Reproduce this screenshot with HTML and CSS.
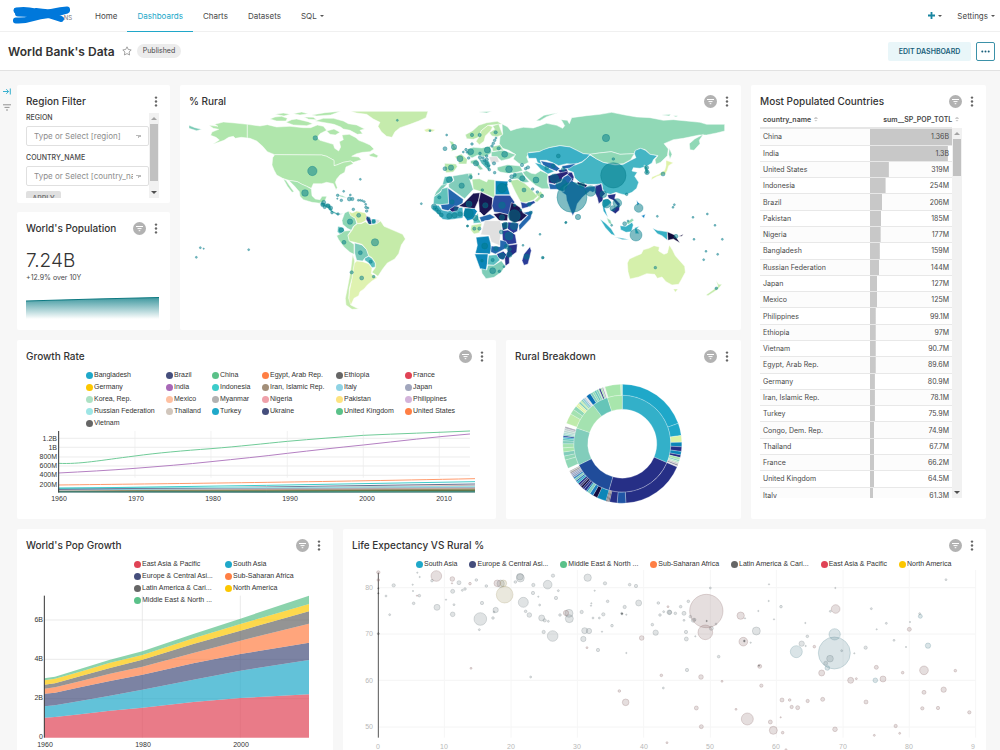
FILE: index.html
```html
<!DOCTYPE html>
<html lang="en">
<head>
  <meta charset="UTF-8">
  <meta name="viewport" content="width=device-width, initial-scale=1.0">
  <title>World Bank's Data</title>
  <link rel="stylesheet" href="styles.css">
</head>
<body>
  <svg class="defs" width="0" height="0" aria-hidden="true">
    <symbol id="filter" viewBox="0 0 13 13">
      <circle cx="6.5" cy="6.5" r="6.5" fill="#b2b2b2"/>
      <path d="M3 4.5h7M4.5 6.6h4M5.7 8.7h1.6" stroke="#fff" stroke-width="1"/>
    </symbol>
    <symbol id="dots" viewBox="0 0 4 11">
      <circle cx="2" cy="1.6" r="1.2"/><circle cx="2" cy="5.5" r="1.2"/><circle cx="2" cy="9.4" r="1.2"/>
    </symbol>
  </svg>

  <div class="app">
    <header class="navbar">
      <a href="#" class="logo" aria-label="Logo">
        <span>NS</span>
        <svg viewBox="0 0 60 18" width="60" height="18">
          <path d="M4.500 4.500Q14 3 23 5.500T37 9Q44 11 49 13M4 14.500Q12 15 20 12.500T37 9Q46 7 55 4.500M6 7.500Q20 8 30 9.500M24 5Q36 7 42 5.500T55 3.500" fill="none" stroke="#0078db" stroke-width="6" stroke-linecap="round" stroke-linejoin="round"/>
        </svg>
      </a>
      <nav>
        <a href="#">Home</a>
        <a href="#" class="active">Dashboards</a>
        <a href="#">Charts</a>
        <a href="#">Datasets</a>
        <a href="#">SQL <i class="caret"></i></a>
      </nav>
      <div class="nav-right">
        <a href="#" class="add" aria-label="Add"><svg width="7" height="7" viewBox="0 0 7 7"><path d="M3.500 0v7M0 3.500h7" stroke="#1985a0" stroke-width="1.800"/></svg><i class="caret"></i></a>
        <a href="#">Settings <i class="caret"></i></a>
      </div>
    </header>

    <div class="titlebar">
      <h1>World Bank's Data</h1>
      <svg class="star" width="10" height="10" viewBox="0 0 10 10"><path d="M5 .8l1.300 2.700 2.900.4-2.100 2.100.5 3L5 7.600 2.400 9l.5-3L.8 3.900l2.900-.4z" fill="none" stroke="#999" stroke-width=".9"/></svg>
      <span class="status">Published</span>
      <button type="button" class="edit">EDIT DASHBOARD</button>
      <button type="button" class="more" aria-label="More"><svg width="9" height="3" viewBox="0 0 9 3"><circle cx="1.300" cy="1.500" r="1"/><circle cx="4.500" cy="1.500" r="1"/><circle cx="7.700" cy="1.500" r="1"/></svg></button>
    </div>

    <div class="content">
      <aside class="rail">
        <svg width="8" height="7" viewBox="0 0 8 7"><path d="M0 3.500h5.500M3.300 1.200l2.300 2.300-2.300 2.300M7.300.5v6" fill="none" stroke="#20a7c9" stroke-width=".9"/></svg>
        <svg width="8" height="7" viewBox="0 0 8 7"><path d="M0 .8h8M1.500 3.400h5M3 6h2" stroke="#888" stroke-width=".9"/></svg>
      </aside>

      <main>
        <div class="upper">
          <div class="upper-left">
            <div class="row-map">
              <div class="stack">
                <section class="card region">
                  <div class="card-head"><h2>Region Filter</h2><svg class="dots"><use href="#dots"/></svg></div>
                  <div class="region-body">
                    <form>
                      <label for="region">REGION</label>
                      <select id="region"><option>Type or Select [region]</option></select>
                      <label for="country">COUNTRY_NAME</label>
                      <select id="country"><option>Type or Select [country_name]</option></select>
                      <button type="button" class="apply">APPLY</button>
                    </form>
                    <div class="scrollbar"><i class="up"></i><b></b><i class="down"></i></div>
                  </div>
                </section>
                <section class="card population">
                  <div class="card-head"><h2>World's Population</h2><svg class="badge"><use href="#filter"/></svg><svg class="dots"><use href="#dots"/></svg></div>
                  <div class="big">7.24B</div>
                  <div class="sub">+12.9% over 10Y</div>
                  <svg class="spark" viewBox="0 0 133 23" preserveAspectRatio="none">
                    <defs><linearGradient id="fade" x1="0" y1="0" x2="0" y2="1"><stop offset="0" stop-color="#3f989f"/><stop offset="1" stop-color="#fff"/></linearGradient></defs>
                    <path d="M0 5L70 3 133 1.500V23H0z" fill="url(#fade)"/>
                    <path d="M0 5L70 3 133 1.500" fill="none" stroke="#0f7a82" stroke-width="1.200"/>
                  </svg>
                </section>
              </div>
              <section class="card">
                <div class="card-head"><h2>% Rural</h2><svg class="badge"><use href="#filter"/></svg><svg class="dots"><use href="#dots"/></svg></div>
                <svg id="map" class="chart" viewBox="189 111 543 210"></svg>
              </section>
            </div>

            <div class="row-growth">
              <section class="card">
                <div class="card-head"><h2>Growth Rate</h2><svg class="badge"><use href="#filter"/></svg><svg class="dots"><use href="#dots"/></svg></div>
                <ul class="legend legend-growth" id="growthLegend"></ul>
                <svg id="growth" class="chart" viewBox="26 429 461 78"></svg>
              </section>
              <section class="card">
                <div class="card-head"><h2>Rural Breakdown</h2><svg class="badge"><use href="#filter"/></svg><svg class="dots"><use href="#dots"/></svg></div>
                <svg id="sunburst" class="chart" viewBox="515 366 217 144"></svg>
              </section>
            </div>
          </div>

          <section class="card">
            <div class="card-head"><h2>Most Populated Countries</h2><svg class="badge"><use href="#filter"/></svg><svg class="dots"><use href="#dots"/></svg></div>
            <div class="table-wrap">
              <table id="countries">
                <thead>
                  <tr><th>country_name <i class="sort"></i></th><th><span>sum__SP_POP_TOTL <i class="sort"></i></span></th></tr>
                </thead>
                <tbody></tbody>
              </table>
              <div class="scrollbar"><i class="up"></i><b></b><i class="down"></i></div>
            </div>
          </section>
        </div>

        <div class="lower">
          <section class="card">
            <div class="card-head"><h2>World's Pop Growth</h2><svg class="badge"><use href="#filter"/></svg><svg class="dots"><use href="#dots"/></svg></div>
            <ul class="legend legend-pop" id="popLegend"></ul>
            <svg id="pop" class="chart" viewBox="26 594 298 165"></svg>
          </section>
          <section class="card">
            <div class="card-head"><h2>Life Expectancy VS Rural %</h2><svg class="badge"><use href="#filter"/></svg><svg class="dots"><use href="#dots"/></svg></div>
            <ul class="legend legend-life" id="lifeLegend"></ul>
            <svg id="life" class="chart" viewBox="352 570 625 189"></svg>
          </section>
        </div>
      </main>
    </div>
  </div>

  <script src="script.js"></script>
</body>
</html>
```
FILE: styles.css
```css
* {
  box-sizing: border-box;
}
body {
  margin: 0;
  font-family: Inter, "Liberation Sans", sans-serif;
  font-size: 8px;
  color: #484848;
  background: #f7f7f7;
}
h1, h2, ul {
  margin: 0;
  padding: 0;
}
a {
  color: inherit;
  text-decoration: none;
}
button, select {
  font: inherit;
  cursor: pointer;
}
.defs {
  position: absolute;
}
.app {
  display: flex;
  flex-direction: column;
  height: 100vh;
  overflow: hidden;
}

/* top navigation */
.navbar {
  display: flex;
  flex: none;
  height: 32px;
  background: #fff;
  border-bottom: 1px solid #f0f0f0;
}
.logo {
  position: relative;
  width: 60px;
  margin: 6px 13px 0 12px;
}
.logo span {
  position: absolute;
  right: 0;
  top: 8px;
  font-size: 6px;
  color: #777;
}
.logo svg {
  position: relative;
  display: block;
}
nav {
  display: flex;
}
nav a {
  display: flex;
  align-items: center;
  height: 32px;
  padding: 0 10px;
  border-bottom: 1px solid transparent;
}
nav a.active {
  color: #20a7c9;
  border-bottom-color: #20a7c9;
}
.caret {
  display: inline-block;
  margin-left: 3px;
  border: 2px solid transparent;
  border-top-color: #555;
  border-bottom: 0;
}
.nav-right {
  display: flex;
  align-items: center;
  gap: 15px;
  margin-left: auto;
  padding-right: 5px;
}
.nav-right a {
  display: flex;
  align-items: center;
}

/* dashboard title */
.titlebar {
  display: flex;
  flex: none;
  align-items: center;
  height: 39px;
  padding: 0 5px 0 8px;
  background: #fff;
  border-bottom: 1px solid #e2e2e2;
}
h1 {
  font-size: 12px;
  font-weight: 600;
  color: #333;
}
.star {
  margin: 0 5px 0 7px;
}
.status {
  height: 14px;
  padding: 0 6px;
  border-radius: 7px;
  background: #ececec;
  font-size: 7px;
  line-height: 14px;
}
.edit, .more {
  height: 19px;
  padding: 0;
  border-radius: 2px;
  color: #1a5f7a;
}
.edit {
  width: 83px;
  margin-left: auto;
  border: 0;
  background: #e9f6f9;
  font-size: 7px;
  font-weight: 600;
}
.more {
  display: flex;
  align-items: center;
  justify-content: center;
  width: 19px;
  margin-left: 5px;
  border: 1px solid #3b91a8;
  background: #fff;
}
.more svg {
  fill: #1a5f7a;
}

/* dashboard grid */
.content {
  display: flex;
}
.rail {
  display: flex;
  flex: none;
  flex-direction: column;
  align-items: center;
  gap: 9px;
  width: 17px;
  padding: 17px 3px 0 0;
}
main {
  flex: 1;
  min-width: 0;
  padding: 14px 14px 14px 0;
}
.upper, .row-map, .row-growth, .lower {
  display: grid;
  gap: 10px;
}
.upper {
  grid-template-columns: 724fr 235fr;
}
.row-map {
  grid-template-columns: 153fr 561fr;
  margin-bottom: 10px;
}
.row-growth {
  grid-template-columns: 479fr 235fr;
}
.lower {
  grid-template-columns: 316fr 643fr;
  margin-top: 10px;
}
.stack {
  display: grid;
  grid-template-rows: 1fr 1fr;
  gap: 9px;
  min-width: 0;
}
.card {
  min-width: 0;
  padding: 9px;
  border-radius: 2px;
  background: #fff;
}
.card-head {
  display: flex;
  align-items: center;
  gap: 8px;
  height: 14px;
  margin-bottom: 3px;
  padding-right: 3px;
}
h2 {
  margin-right: auto;
  font-size: 10px;
  font-weight: 500;
  line-height: 14px;
  color: #333;
  white-space: nowrap;
}
.badge {
  width: 13px;
  height: 13px;
}
.dots {
  width: 4px;
  height: 11px;
  fill: #666;
}
.chart {
  display: block;
  width: 100%;
  height: auto;
}
.chart text {
  font-family: "Liberation Sans", Arial, sans-serif;
  font-size: 7px;
  fill: #333;
}
.chart text.faint {
  fill: #b8b8b8;
}

/* fake scrollbars */
.scrollbar {
  display: flex;
  flex: none;
  flex-direction: column;
  align-items: center;
  width: 10px;
  background: #f1f1f1;
}
.scrollbar b {
  width: 8px;
  background: #c1c1c1;
}
.scrollbar i {
  margin: 4px 0;
  border: 3px solid transparent;
}
.scrollbar .up {
  border-top: 0;
  border-bottom-color: #a3a3a3;
}
.scrollbar .down {
  margin-top: auto;
  border-bottom: 0;
  border-top-color: #505050;
}

/* region filter */
.region {
  padding-bottom: 4px;
}
.region-body {
  display: flex;
  height: 87px;
  padding-top: 2px;
  margin-right: 2px;
}
.region form {
  flex: 1;
  min-width: 0;
  overflow: hidden;
}
.region label {
  display: block;
  margin-bottom: 3px;
  font-size: 7px;
  font-weight: 500;
  line-height: 10px;
}
.region select {
  display: block;
  width: 100%;
  height: 20px;
  margin-bottom: 7px;
  padding: 0 15px 0 7px;
  border: 1px solid #e0e0e0;
  border-radius: 2px;
  appearance: none;
  color: #8c8c8c;
  background:
    linear-gradient(45deg, transparent 50%, #bbb 50%) no-repeat right 9px center / 3px 3px,
    linear-gradient(-45deg, transparent 50%, #bbb 50%) no-repeat right 6px center / 3px 3px,
    #fff;
}
.apply {
  display: block;
  width: 35px;
  height: 15px;
  margin-top: -2px;
  padding: 0;
  border: 0;
  border-radius: 2px;
  font-size: 7px;
  font-weight: 600;
  color: #777;
  background: #e0e0e0;
}
.region .scrollbar b {
  height: 57px;
}

/* big number */
.big {
  margin-top: 14px;
  font-size: 19px;
  font-weight: 300;
  line-height: 24px;
  color: #333;
}
.sub {
  font-size: 7px;
  line-height: 10px;
}
.spark {
  display: block;
  width: 133px;
  max-width: 100%;
  height: 23px;
  margin-top: 13px;
}

/* legends */
.legend {
  display: grid;
  margin-top: 6px;
  list-style: none;
  font-family: "Liberation Sans", Arial, sans-serif;
  font-size: 7px;
  line-height: 12px;
  color: #333;
}
.legend li {
  display: flex;
  align-items: center;
  gap: 1px;
  white-space: nowrap;
}
.legend i {
  width: 7px;
  height: 7px;
  border-radius: 50%;
}
.legend-growth {
  grid-template-columns: 80px 46px 50px 74px 69px auto;
  padding-left: 60px;
}
.legend-pop {
  grid-template-columns: 91px auto;
  padding-left: 108px;
}
.legend-pop + .chart {
  position: relative;
  margin-top: -12px;
}
.legend-life {
  display: flex;
  gap: 12px;
  padding-left: 64px;
}

/* country table */
.table-wrap {
  display: flex;
  height: 387px;
  margin-right: 15px;
  overflow: hidden;
}
.table-wrap .scrollbar {
  margin-top: 17px;
}
.table-wrap .scrollbar b {
  height: 37px;
}
table {
  flex: 1;
  height: 393px;
  table-layout: fixed;
  border-collapse: collapse;
  font-size: 7px;
}
th {
  height: 17px;
  padding: 0 3px;
  border-bottom: 2px solid #e6e6e6;
  font-weight: 600;
  text-align: left;
  white-space: nowrap;
}
th:last-child {
  width: 82px;
  text-align: right;
}
th span {
  margin-right: -10px;
}
.sort {
  display: inline-block;
  width: 4px;
  height: 5px;
  margin-left: 1px;
  background: linear-gradient(#ccc 2px, transparent 2px, transparent 3px, #ccc 3px);
  clip-path: polygon(50% 0, 100% 40%, 100% 60%, 50% 100%, 0 60%, 0 40%);
}
td {
  padding: 0 3px;
  border-bottom: 1px solid #e8e8e8;
}
td:last-child {
  text-align: right;
  background: linear-gradient(#c8c8c8, #c8c8c8) no-repeat;
}
tbody tr:nth-child(odd) {
  background: #fcfcfc;
}
```
FILE: script.js
```js
const LAND = {
  americas: { t: "translate(180 85) scale(.33333)", shapes: [
    ["#7ccbb6", "M27 121L45 128 65 133 50 137 27 130Z"],
    ["#b0e6ac", "M202 118L165 114 130 111 104 118 114 124 87 121 100 130 116 133 96 141 92 151 108 157 118 165 98 178 132 166 146 157 160 154 166 160 184 157 202 159Z"],
    ["#b0e6ac", "M202 118L240 123 262 119 290 126 330 124 370 128 392 128 412 120 430 124 440 136 420 146 411 158 420 166 440 172 460 178 464 190 476 198 482 186 478 170 490 164 486 150 508 148 528 158 536 166 552 172 570 180 582 192 570 200 548 202 530 206 515 214 536 216 544 224 520 232 512 228 490 232 470 240 462 242 462 226 440 214 425 210 284 209 262 200 248 184 230 168 210 160 202 159Z"],
    ["#b0e6ac", "M566 210L580 204 595 212 590 218 572 214Z"],
    ["#b0e6ac", "M270 102L285 96 305 94 322 100 318 108 290 108ZM318 112L335 104 350 102 384 110 398 116 380 122 340 120ZM285 88L310 84 330 88 312 93ZM340 86L365 81 385 86 360 90ZM395 90L435 83 482 79 452 90 410 93ZM372 96L400 97 410 104 386 103Z"],
    ["#b0e6ac", "M405 108L430 100 460 100 490 108 505 116 530 120 554 132 540 136 548 146 532 148 510 136 490 132 482 126 462 118 440 114ZM440 138L462 132 480 142 466 150 450 148Z"],
    ["#b0e6ac", "M284 209L425 210 440 214 462 226 462 242 470 240 490 232 512 228 520 236 498 246 494 262 480 270 470 282 466 292 472 308 468 314 460 296 440 292 425 296 400 296 394 310 380 304 366 298 352 290 326 286 308 280 290 270 282 255 276 240 278 218Z"],
    ["#a5e2ae", "M326 286L352 290 366 298 380 304 394 312 396 332 406 342 420 344 426 334 440 334 436 346 424 356 414 354 396 352 370 344 360 334 358 320 344 304Z"],
    ["#a5e2ae", "M310 282L318 286 330 304 342 320 336 322 322 304Z"],
    ["#55b5b5", "M420 352L450 358 458 378 476 386 490 386 472 390 452 380 442 368 424 362Z"],
    ["#90d8b6", "M470 328L488 332 502 339 482 335Z"],
    ["#c5ebac", "M512 79L744 79 738 98 716 108 690 118 660 128 645 140 636 157 620 154 604 140 594 124 600 112 580 102 560 88 530 84Z"],
    ["#dff2b0", "M732 134L745 130 766 134 758 140 738 141Z"],
    ["#8dd6b4", "M494 384L506 378 512 390 526 400 530 416 520 424 514 436 502 430 488 418 486 406Z"],
    ["#d6efa8", "M506 378L516 384 530 378 556 384 562 396 556 408 544 414 532 416 526 400 512 392Z"],
    ["#2b2f86", "M560 392L572 402 576 418 566 418 558 402Z"],
    ["#45b3c0", "M574 402L588 402 588 416 576 418Z"],
    ["#e0e0e0", "M588 402L600 406 596 416 588 416Z"],
    ["#63c2bb", "M474 424L490 428 494 438 480 448 472 440Z"],
    ["#9cddb1", "M494 438L514 436 504 450 508 468 522 478 522 508 510 502 492 486 476 464 470 452 482 446Z"],
    ["#7bcab9", "M524 474L546 480 560 494 566 512 554 520 548 528 530 526 524 504Z"],
    ["#5cbfc0", "M554 520L566 514 576 520 586 534 586 546 576 548 566 534 554 526Z"],
    ["#c5eba9", "M532 416L544 416 556 410 570 420 590 416 602 408 612 424 640 436 668 448 676 462 664 480 656 506 644 522 622 534 608 552 594 574 576 562 586 548 586 534 576 518 566 512 560 494 546 478 524 472 508 468 504 452 516 436 522 424Z"],
    ["#dff2b0", "M530 528L548 530 566 536 576 550 574 566 592 578 576 588 562 600 552 612 540 620 536 632 522 640 512 662 506 652 508 620 514 590 518 560 522 536Z"],
    ["#c5ebac", "M518 508L524 528 520 552 516 580 508 610 506 640 512 660 536 672 516 673 498 660 496 640 504 600 512 556Z"]
  ], dots: [[406,159,7],[397,258,14],[375,324,10],[652,106,3],[750,137,3],[541,283,3],[491,319,3],[473,331,4],[511,330,3],[472,341,2],[484,346,4],[508,342,6],[517,342,5],[535,346,3],[541,346,3],[547,347,3],[553,350,3],[557,358,3],[558,367,4],[564,369,3],[560,378,4],[520,373,4],[431,352,6],[428,359,6],[434,366,5],[444,362,6],[452,369,6],[456,383,4],[474,387,4],[536,391,6],[566,400,4],[569,412,4],[510,410,8],[581,409,5],[484,435,7],[492,472,6],[585,472,11],[541,503,6],[572,530,5],[515,562,5],[545,579,6],[581,575,4],[61,488,3],[71,491,2],[49,517,3],[206,494,3],[724,356,3],[863,423,3]] },

  africa: { t: "translate(420 100) scale(.33333)", shapes: [
    ["#b8e7ab", "M136 104L158 92 176 76 200 68 232 64 246 72 226 74 204 76 184 92 176 112 160 118 140 116Z"],
    ["#c5ebac", "M184 92L204 76 218 80 212 92 196 108 192 124 178 134 168 124 176 112Z"],
    ["#b5e5ab", "M218 78L236 72 244 94 248 104 232 110 216 108 208 98 224 88Z"],
    ["#90d8b6", "M348 62L372 46 414 38 380 50 360 62ZM176 36L215 34 200 39Z"],
    ["#b8e7ab", "M74 190L108 192 112 200 100 216 78 218 74 206Z"],
    ["#b8e7ab", "M104 170L124 162 142 178 140 192 116 192 116 182Z"],
    ["#b0e5ac", "M88 122L100 126 104 138 112 148 94 154 98 142 92 132Z"],
    ["#8ed8b5", "M142 148L160 142 186 144 210 138 216 158 196 170 172 166 156 174 142 164Z"],
    ["#90d8b6", "M214 156L248 150 270 158 288 164 268 176 244 182 232 172 214 170Z"],
    ["#a5e0b0", "M216 140L240 134 250 150 218 154Z"],
    ["#e0e0e0", "M206 170L232 170 238 186 214 190Z"],
    ["#8dd6b4", "M152 182L170 178 180 196 190 208 180 210 166 194 152 190Z"],
    ["#5cb9b9", "M176 176L206 182 212 196 206 212 196 202 184 190Z"],
    ["#8dd6b4", "M232 202L262 194 300 198 308 212 286 218 262 220 240 216 232 210Z"],
    ["#7fcdb8", "M282 220L306 216 314 230 328 246 310 248 292 236 276 238Z"],
    ["#90d8b6", "M308 216L320 212 334 220 346 222 362 212 384 222 382 246 388 266 366 266 346 256 328 240 314 226Z"],
    ["#b8e7ab", "M270 242L292 238 314 250 330 264 346 282 356 286 340 300 316 308 302 306 286 276Z"],
    ["#b8e7ab", "M346 282L362 274 372 286 352 306 342 304 356 290Z"],
    ["#2748a0", "M302 306L318 310 342 302 346 308 322 322 306 326Z"],
    ["#2467ae", "M362 182L380 186 400 190 420 206 410 214 390 206 370 196Z"],
    ["#3bb0c6", "M344 188L362 192 384 204 404 214 384 222 362 208Z"],
    ["#2467ae", "M425 198L470 190 450 204 430 208Z"],
    ["#262f86", "M414 210L440 206 446 220 420 220Z"],
    ["#2a2478", "M384 228L404 222 440 214 446 220 428 232 424 244 404 252 386 248Z"],
    ["#2467ae", "M386 250L404 254 424 246 430 232 444 224 456 236 446 252 432 262 432 276 410 268 390 268Z"],
    ["#63c2bb", "M74 230L96 228 100 242 84 250 66 260 70 244Z"],
    ["#7fcdb8", "M64 256L84 250 60 276 42 290 48 276Z"],
    ["#82cdbb", "M98 228L146 220 150 240 160 268 134 296 86 262 86 252 102 242Z"],
    ["#8dd6b4", "M146 220L156 220 158 238 150 240Z"],
    ["#b0e5ac", "M156 238L178 236 200 246 204 238 224 240 224 294 180 274 160 268Z"],
    ["#0b86b8", "M226 242L264 244 262 256 270 284 226 284Z"],
    ["#63c2bb", "M42 290L62 276 66 266 84 262 86 312 62 314 40 312Z"],
    ["#2467ae", "M84 264L130 298 128 310 104 322 84 332 66 328 62 314 86 312Z"],
    ["#45aec2", "M36 316L56 316 66 330 84 334 104 324 128 322 130 346 128 354 84 360 68 358 52 340 38 330Z"],
    ["#2a2478", "M88 328L104 318 118 320 112 332 96 336Z"],
    ["#1c1552", "M116 318L132 308 160 280 180 278 176 300 164 326 132 322Z"],
    ["#1c1552", "M182 276L218 294 216 326 192 348 178 334 176 302Z"],
    ["#2a4da0", "M224 286L270 286 284 306 276 330 264 344 240 338 222 336 216 318 220 296Z"],
    ["#0b86b8", "M134 324L164 326 172 334 158 358 142 362 130 346Z"],
    ["#5cbfc0", "M160 358L174 338 176 356 184 368 160 370Z"],
    ["#2467ae", "M178 352L210 342 226 352 208 360 184 366Z"],
    ["#1c1552", "M220 342L240 338 264 344 262 362 238 362Z"],
    ["#1c1552", "M266 342L274 308 284 312 300 322 308 336 322 346 304 362 284 368 268 360Z"],
    ["#2467ae", "M308 338L338 332 332 356 298 392 296 376 306 364 324 346Z"],
    ["#2a3c98", "M264 366L296 370 292 394 280 400 262 386Z"],
    ["#1f3c7c", "M244 370L262 366 262 386 248 392Z"],
    ["#c5ebac", "M154 376L186 370 178 398 162 402 152 390Z"],
    ["#e0e0e0", "M194 362L240 362 246 380 240 420 242 438 214 426 208 406 182 404Z"],
    ["#2a3c98", "M246 392L264 390 286 404 290 430 264 434 248 420Z"],
    ["#0b86b8", "M168 412L206 408 212 430 214 446 210 462 166 460 172 436Z"],
    ["#2467ae", "M214 438L240 440 240 420 258 424 266 440 244 452 226 462 212 456Z"],
    ["#262f86", "M264 436L292 432 290 456 268 472 268 490 256 498 254 474 262 456Z"],
    ["#2a3c98", "M230 462L250 454 260 464 250 480 234 474Z"],
    ["#0b86b8", "M164 462L204 462 202 490 198 512 180 506Z"],
    ["#5cbfc0", "M206 466L230 464 240 480 222 496 202 494Z"],
    ["#7fcdb8", "M184 506L200 510 204 496 222 496 244 482 256 498 244 516 222 532 198 536 186 520Z"],
    ["#2a3c98", "M330 440L334 452 324 492 312 496 306 482 312 462Z"]
  ], dots: [[102,141,8],[75,146,6],[80,105,3],[156,105,5],[179,105,5],[227,97,5],[152,155,9],[120,176,9],[93,203,8],[75,206,6],[168,190,8],[202,150,9],[254,163,9],[236,145,5],[222,190,5],[267,208,10],[88,239,9],[125,257,8],[152,231,5],[187,270,4],[246,264,14],[312,270,6],[348,240,9],[307,235,8],[58,292,5],[147,312,9],[196,316,8],[246,316,10],[283,347,18],[146,340,14],[246,352,8],[282,378,11],[267,408,12],[194,438,9],[163,386,5],[178,386,5],[218,480,5],[218,512,9],[238,514,4],[252,500,3],[186,482,4],[228,446,7],[246,468,9],[268,464,8],[320,470,8],[309,436,3],[368,473,4],[360,403,3],[437,368,3],[403,235,13],[425,254,17],[456,292,45],[474,351,8],[256,376,9],[338,267,4],[352,276,4],[366,288,5],[328,313,6],[332,338,5],[306,195,5],[324,202,5],[317,206,4],[380,204,6],[400,198,6],[430,208,6],[415,168,6],[42,320,8],[50,328,5],[56,336,6],[64,345,6],[88,348,8],[104,346,8],[120,342,7],[96,306,7],[108,326,6],[130,156,3],[138,149,4],[141,157,3],[146,174,4],[180,160,4],[180,172,5],[189,174,4],[194,182,4],[200,190,5],[205,198,4],[208,209,4],[200,178,5],[200,168,4],[156,132,4],[224,121,4],[220,130,4],[216,138,4],[228,114,3],[176,222,2],[259,254,3],[275,230,6],[284,225,5],[270,242,4],[224,218,4],[166,354,8],[268,448,6],[260,440,7],[244,396,6],[142,378,3],[284,316,4],[302,330,3]] },

  asia: { t: "translate(540 85) scale(.33333)", shapes: [
    ["#90d8b6", "M-114 117L-98 125 -88 137 -70 131 -50 127 -20 129 0 122 20 115 50 121 68 130 74 122 66 108 62 104 82 106 88 116 95 98 140 92 180 88 215 82 255 90 290 96 330 98 370 106 400 104 440 108 480 112 500 118 554 118 554 138 530 144 500 150 478 150 430 160 400 164 372 176 385 192 382 212 362 232 348 238 345 224 354 212 330 208 316 194 300 190 285 198 283 206 240 208 214 200 178 204 150 208 130 206 110 196 90 186 60 182 28 188 -2 200 -32 202 -40 216 -34 232 -46 238 -62 236 -80 222 -74 208 -94 196 -112 190 -122 176 -120 156 -112 146Z"],
    ["#90d8b6", "M490 148L478 166 480 176 462 196 450 194 448 176 464 162ZM388 190L396 208 390 222 386 208ZM365 90L392 88 388 93ZM400 92L414 92 408 96Z"],
    ["#3bb0c6", "M-38 204L-2 200 10 194 28 188 60 182 90 186 110 196 130 206 150 208 140 220 126 230 106 238 80 236 56 242 40 234 20 226 0 226 6 240 -8 232 -12 220 -34 220Z"],
    ["#44b5c4", "M80 240L106 240 126 232 140 220 150 210 170 222 190 232 225 240 250 238 272 226 288 218 283 206 286 196 302 190 316 196 330 208 352 212 340 224 336 234 320 244 300 250 280 248 276 258 292 262 284 274 296 292 290 310 276 322 256 330 240 326 228 322 212 328 196 324 188 312 186 296 170 298 144 298 118 292 104 278 100 262 84 256Z"],
    ["#90d8b6", "M150 208L178 204 214 200 240 208 283 206 272 224 250 236 225 238 190 232 170 222Z"],
    ["#262f86", "M82 262L96 262 102 276 98 292 84 284Z"],
    ["#2c64ae", "M66 300L84 290 80 280 94 284 100 290 112 298 140 306 162 304 176 298 168 318 158 322 150 318 140 326 128 336 112 356 106 378 98 392 90 372 80 346 78 330 66 322 60 312Z"],
    ["#1a1452", "M112 290L142 300 138 307 112 298Z"],
    ["#262f86", "M166 304L184 296 188 316 196 326 188 334 190 346 176 356 172 338 164 322Z"],
    ["#2aa8c6", "M188 344L204 342 214 352 204 362 194 368 204 398 190 378 188 364Z"],
    ["#262f86", "M202 330L228 326 224 340 240 356 238 376 226 386 212 376 232 362 220 346 206 340Z"],
    ["#45b3a8", "M312 240L322 246 326 264 318 268 314 252Z"],
    ["#dff2a8", "M378 226L400 233 386 242 382 256 376 268 352 274 334 284 336 276 356 268 374 256 378 242Z"],
    ["#36b0c4", "M180 402L196 414 214 432 226 452 214 448 196 428ZM224 456L250 460 268 464 248 464ZM240 422L258 424 276 412 280 420 274 440 258 442 242 434ZM284 428L298 424 290 432 298 446 286 446Z"],
    ["#90d8b6", "M200 398L212 406 216 420 206 414ZM258 414L276 400 282 406 266 418Z"],
    ["#36b0c4", "M338 430L352 436 382 440 382 466 366 452 352 446Z"],
    ["#120c3c", "M382 440L404 450 420 474 400 462 384 466ZM416 454L430 448 426 454Z"],
    ["#1585c4", "M290 346L298 356 292 362ZM304 392L316 388 312 400Z"],
    ["#d5f0ab", "M262 534L268 522 286 514 304 506 310 494 326 490 342 482 358 486 356 498 372 508 382 504 388 480 398 496 406 512 420 528 434 544 436 562 424 584 416 598 396 600 378 590 366 576 352 580 344 568 320 566 296 576 270 582 264 560ZM400 612L414 612 406 622Z"],
    ["#c5ebac", "M528 586L536 598 546 598 536 610 526 618 504 632 498 630 520 614 534 604Z"]
  ], dots: [[220,271,38],[198,159,11],[220,222,4],[320,248,6],[321,262,7],[369,267,6],[126,300,8],[152,318,16],[190,328,10],[200,356,13],[232,354,13],[218,370,8],[296,369,13],[288,450,18],[254,416,6],[264,408,3],[352,394,3],[399,367,3],[403,359,3],[459,397,3],[502,387,3],[525,421,3],[547,463,3],[462,463,3],[498,499,3],[533,508,3],[491,524,3],[346,548,4],[529,610,4],[408,454,6],[260,328,4],[215,421,3],[78,412,3],[9,518,3]] }
};

const COUNTRIES = [
  ["China", "1.36B", 1364], ["India", "1.3B", 1295], ["United States", "319M", 319], ["Indonesia", "254M", 254],
  ["Brazil", "206M", 206], ["Pakistan", "185M", 185], ["Nigeria", "177M", 177], ["Bangladesh", "159M", 159],
  ["Russian Federation", "144M", 144], ["Japan", "127M", 127], ["Mexico", "125M", 125], ["Philippines", "99.1M", 99],
  ["Ethiopia", "97M", 97], ["Vietnam", "90.7M", 91], ["Egypt, Arab Rep.", "89.6M", 90], ["Germany", "80.9M", 81],
  ["Iran, Islamic Rep.", "78.1M", 78], ["Turkey", "75.9M", 76], ["Congo, Dem. Rep.", "74.9M", 75],
  ["Thailand", "67.7M", 68], ["France", "66.2M", 66], ["United Kingdom", "64.5M", 64.5], ["Italy", "61.3M", 61]
];

const GROWTH = [
  ["Bangladesh", "#1fa8c9"], ["Brazil", "#454e7c"], ["China", "#5ac189"], ["Egypt, Arab Rep.", "#ff7f44"], ["Ethiopia", "#666666"], ["France", "#e04355"],
  ["Germany", "#fcc700"], ["India", "#a868b7"], ["Indonesia", "#3cccca"], ["Iran, Islamic Rep.", "#a38f79"], ["Italy", "#8fd3e4"], ["Japan", "#a1a6bd"],
  ["Korea, Rep.", "#ace1c4"], ["Mexico", "#fec0a1"], ["Myanmar", "#b2b2b2"], ["Nigeria", "#efa1aa"], ["Pakistan", "#fde380"], ["Philippines", "#d3b3da"],
  ["Russian Federation", "#9ee5e5"], ["Thailand", "#d1c6bc"], ["Turkey", "#1fa8c9"], ["Ukraine", "#454e7c"], ["United Kingdom", "#5ac189"], ["United States", "#ff7f44"],
  ["Vietnam", "#666666"]
];

const POP = [
  ["East Asia & Pacific", "#e04355"], ["South Asia", "#1fa8c9"], ["Europe & Central Asi...", "#454e7c"], ["Sub-Saharan Africa", "#ff7f44"],
  ["Latin America & Cari...", "#666666"], ["North America", "#fcc700"], ["Middle East & North ...", "#5ac189"]
];

const LIFE = [
  ["South Asia", "#1fa8c9"], ["Europe & Central Asi...", "#454e7c"], ["Middle East & North ...", "#5ac189"], ["Sub-Saharan Africa", "#ff7f44"],
  ["Latin America & Cari...", "#666666"], ["East Asia & Pacific", "#e04355"], ["North America", "#fcc700"]
];

function legend(id, items) {
  document.getElementById(id).innerHTML = items.map(([name, color]) =>
    `<li><i style="background:${color}"></i>${name.replace("&", "&amp;")}</li>`).join("");
}

function text(x, y, label, anchor, cls) {
  return `<text x="${x}" y="${y}" text-anchor="${anchor}" class="${cls || ""}">${label}</text>`;
}

function drawMap() {
  let land = "", dots = "";
  ["asia", "africa", "americas"].forEach(key => {
    const part = LAND[key];
    land += `<g transform="${part.t}" stroke="#fff" stroke-width="1.500" stroke-linejoin="round">` +
      part.shapes.map(([fill, d]) => `<path fill="${fill}" d="${d}"/>`).join("") + "</g>";
    dots += `<g transform="${part.t}" fill="#007a87" fill-opacity=".5" stroke="#007a87" stroke-opacity=".7" stroke-width="1.500">` +
      part.dots.map(([x, y, r]) => `<circle cx="${x}" cy="${y}" r="${r}"/>`).join("") + "</g>";
  });
  document.getElementById("map").innerHTML = land + dots;
}

function drawTable() {
  const body = document.querySelector("#countries tbody");
  COUNTRIES.forEach(([name, label, value]) => {
    body.insertAdjacentHTML("beforeend",
      `<tr><td>${name}</td><td style="background-size:${Math.round(value / 13.64)}% 100%">${label}</td></tr>`);
  });
}

function drawGrowth() {
  let out = '<g transform="translate(0 335) scale(.33333)" fill="none">';
  [310, 337, 366, 393, 421].forEach(y => out += `<path d="M176 ${y}H1410" stroke="#e4e4e4" stroke-width="2"/>`);
  [405, 633, 862, 1090, 1318].forEach(x => out += `<path d="M${x} 288V428" stroke="#ececec" stroke-width="2"/>`);
  // the small countries bunch up at the bottom: start, end, colour
  [[470, 470, "#2a6a6a"], [469, 468, "#5ac189"], [468, 465, "#666666"], [467, 466, "#5b6f3c"], [466, 463, "#8a8f55"], [465, 461, "#a38f79"],
   [464, 459, "#c9a9a0"], [463, 456, "#b2b2b2"], [466, 451, "#efb1a1"], [465, 453, "#8fd3e4"], [461, 457, "#a1a6bd"],
   [463, 447, "#666e92"], [458, 455, "#9ee5e5"], [460, 440, "#3cccca"]].forEach(([a, b, c]) =>
    out += `<path d="M176 ${a}Q800 ${(a + b) / 2 + 2} 1425 ${b}" stroke="${c}" stroke-width="3"/>`);
  out += '<path d="M176 471H1425" stroke="#33706c" stroke-width="3"/>';
  out += '<path d="M176 450C500 446 900 442 1425 431" stroke="#ff9a6b" stroke-width="3"/>';
  out += '<path d="M176 414C250 410 330 406 405 400 480 394 560 388 633 380 710 372 790 364 862 355 940 346 1010 338 1090 330 1200 318 1300 306 1410 297" stroke="#b47fc2" stroke-width="3"/>';
  out += '<path d="M176 385C240 388 300 376 405 363 470 354 550 347 633 341 720 334 790 326 862 319 940 312 1010 307 1090 301 1200 296 1300 293 1410 288" stroke="#6fcb98" stroke-width="3"/>';
  out += '<path d="M176 288V473" stroke="#333" stroke-width="3"/></g>';
  ["1.2B", "1B", "800M", "600M", "400M", "200M"].forEach((l, i) => out += text(57, 441 + Math.round(i * 9.1), l, "end"));
  [1960, 1970, 1980, 1990, 2000, 2010].forEach((l, i) => out += text(59 + i * 77, 501, l, "middle"));
  document.getElementById("growth").innerHTML = out;
}

function slice(r1, r2, a1, a2, fill) {
  const pt = (r, a) => {
    const t = (a - 90) * Math.PI / 180;
    return (r * Math.cos(t)).toFixed(2) + " " + (r * Math.sin(t)).toFixed(2);
  };
  return `<path fill="${fill}" d="M${pt(r2, a1)}A${r2} ${r2} 0 0 1 ${pt(r2, a2)}L${pt(r1, a2)}A${r1} ${r1} 0 0 0 ${pt(r1, a1)}Z"/>`;
}

function drawSunburst() {
  // each entry: end angle, colour
  const inner = [[113, "#33b0c9"], [196, "#262f86"], [244, "#204c9a"], [289, "#82cdbb"], [323, "#a4e2b0"], [342, "#66c5b8"], [360, "#a8e6ac"]];
  const outer = [[70, "#1fa8c9"], [82, "#1fa8c9"], [88.5, "#dbf3a5"], [93, "#0b86b8"], [97.5, "#262f86"], [101, "#0b86b8"], [103.5, "#262f86"],
    [106, "#a8e6ac"], [107.5, "#82cdbb"], [109, "#b7e8c6"], [110.5, "#c9c9c9"], [112, "#8a8a9c"], [113, "#ddd"],
    [176.5, "#262f86"], [185, "#1f55a5"], [192.5, "#262f86"], [193.7, "#555"], [195, "#7a6a7c"], [196, "#444"],
    [205, "#0b86b8"], [209.5, "#120b3f"], [213, "#1f7fc0"], [216, "#82cdbb"], [217.5, "#0b86b8"], [220, "#262f86"], [222, "#262f86"], [224, "#120b3f"],
    [226, "#4a4a80"], [228, "#262f86"], [230, "#33b0c9"], [231.5, "#2467ae"], [233.5, "#82cdbb"], [235.5, "#3f8fc0"], [237, "#8593b8"], [238.5, "#8d9fc0"],
    [240, "#9aa0c0"], [241.5, "#999"], [243, "#bbb"], [245.5, "#fff"],
    [254, "#90d8b6"], [258, "#90d8b6"], [262, "#82cdbb"], [266, "#a8e6ac"], [270, "#a4e2b0"], [273, "#82cdbb"], [275, "#66c5b8"], [276.5, "#33b0c9"], [278, "#2748a0"],
    [279.5, "#82cdbb"], [281, "#a8d8d0"], [283, "#b9d8d0"], [285, "#c0d0d0"], [287, "#b0aebc"], [290, "#fff"],
    [300, "#bfebab"], [305, "#a4e2b0"], [309, "#90d8b6"], [311, "#dbf3a5"], [313, "#dff2b0"], [315, "#82cdbb"], [316.5, "#c5ebac"], [318, "#82cdbb"], [320, "#8fc8d8"],
    [321.5, "#b7c8d8"], [323, "#e4e4e4"], [327.5, "#0b6fb5"], [330, "#82cdbb"], [332, "#90d8b6"], [334, "#66c5b8"], [336, "#82cdbb"], [337, "#a8e6ac"],
    [338.5, "#262f86"], [340, "#a8e6ac"], [341.5, "#b0b0c0"], [343, "#eef5ee"], [358.5, "#a8e6ac"], [360, "#cdeecf"]];
  let out = '<g transform="translate(622.300 443.700)" stroke="#fff" stroke-opacity=".6" stroke-width=".4">';
  [[34.5, 48.5, inner], [48.5, 59.5, outer]].forEach(([r1, r2, ring]) => {
    let from = 0;
    ring.forEach(([to, fill]) => {
      out += slice(r1, r2, from, to, fill);
      from = to;
    });
  });
  document.getElementById("sunburst").innerHTML = out + "</g>";
}

function drawPop() {
  const xs = [133, 165, 240, 330, 427, 580, 721, 927];
  const edges = [
    [638, 638, 638, 638, 638, 638, 638, 638],
    [578, 576, 568, 557, 548, 531, 519, 508],
    [544, 541, 528, 512, 494, 464, 437, 405],
    [506, 503, 487, 468, 449, 415, 387, 353],
    [491, 487, 469, 446, 425, 384, 347, 296],
    [479, 475, 454, 429, 404, 357, 317, 259],
    [466, 461, 440, 413, 390, 340, 297, 237],
    [460, 455, 432, 404, 379, 327, 281, 212]
  ];
  let out = '<g transform="translate(0 525) scale(.33333)">';
  [285, 403, 521].forEach(y => out += `<path d="M133 ${y}H927" stroke="#e0e0e0" stroke-width="2"/>`);
  [427, 721].forEach(x => out += `<path d="M${x} 212V638" stroke="#e0e0e0" stroke-width="2"/>`);
  POP.forEach(([, color], i) => {
    const top = xs.map((x, k) => x + " " + edges[i + 1][k]);
    const bottom = xs.map((x, k) => x + " " + edges[i][k]).reverse();
    out += `<path fill="${color}" fill-opacity=".7" d="M${top.join("L")}L${bottom.join("L")}Z"/>`;
  });
  out += '<path d="M133 212V638" stroke="#333" stroke-width="3"/></g>';
  ["6B", "4B", "2B", "0"].forEach((l, i) => out += text(43, 622 + i * 39, l, "end"));
  [1960, 1980, 2000].forEach((l, i) => out += text(45 + i * 98, 747, l, "middle"));
  document.getElementById("pop").innerHTML = out;
}

function drawLife() {
  const grey = [[161,181,5],[138,213,3],[149,269,3],[221,235,4],[219,198,2],[218,179,2],[232,143,2],[239,156,2],[238,212,4],[276,167,4],[291,247,9],[318,224,2],[338,199,6],
    [338,268,7],[342,239,3],[357,173,6],[367,196,3],[375,192,4],[409,165,4],[439,183,4],[426,234,5],[421,282,19],[418,314,3],[459,279,4],[462,261,3],[467,255,8],[482,176,11],
    [526,171,4],[540,155,10],[541,159,12],[550,232,15],[557,259,4],[568,270,7],[572,456,3],[580,180,5],[579,204,5],[595,215,2],[599,240,3],[605,279,9],[614,286,5],[625,289,3],
    [611,321,5],[623,179,13],[638,333,16],[639,152,5],[655,197,3],[648,219,5],[660,270,4],[687,265,12],[688,281,12],[725,261,5],[734,317,9],[747,318,8],[730,342,8],
    [743,158,11],[764,197,2],[754,235,2],[753,242,2],[759,279,3],[778,279,3],[790,268,5],[795,175,5],[803,229,4],[816,302,4],[786,320,2],[774,375,5],[859,384,2],[854,246,5],
    [845,265,3],[846,267,3],[859,269,2],[869,179,4],[888,183,5],[896,234,9],[937,299,4],[947,323,8],[955,234,4],[960,270,4],[971,260,3],[970,489,3],[988,262,7],[989,262,6],
    [1045,229,4],[1022,245,4],[1006,265,4],[1032,265,6],[1032,286,3],[1051,275,4],[1060,286,6],[1064,284,4],[1038,321,5],[1039,342,6],[1066,334,2],[1111,189,3],[1114,310,6],
    [1128,297,3],[1136,395,4],[1041,435,5],[1286,228,2],[1287,178,2],[1255,258,2],[1323,245,4],[1302,283,2],[1396,294,2],[1402,334,4],[1397,363,2],[1232,353,2],[1215,280,2],
    [1486,189,2],[1471,259,3],[1213,348,3],[1385,356,8],[1457,415,6],[1470,401,10],[1505,377,3],[1543,385,2],[1577,368,5],[1594,251,3],[1610,313,2],[1639,295,3],[1662,346,3],
    [1698,366,2],[1710,291,2],[1739,266,3],[1818,164,3],[1249,318,12]];
  const pink = [[115,142,5],[115,165,4],[289,153,16],[231,212,2],[337,162,7],[336,175,2],[390,176,4],[472,175,10],[393,430,3],[678,264,8],[741,368,3],[838,498,4],[857,532,10],
    [905,339,7],[964,451,4],[984,245,3],[981,653,3],[1099,258,50],[1096,322,22],[1202,272,11],[1210,350,13],[1259,424,6],[1083,456,7],[1146,469,3],[1264,482,5],[1188,553,3],
    [1069,549,6],[1084,605,6],[1222,582,18],[1291,591,6],[1322,577,2],[1300,616,12],[1328,623,4],[1326,525,6],[1349,525,4],[1355,546,5],[1373,548,6],[1403,528,5],[1448,523,6],
    [1423,365,4],[1445,444,9],[1487,252,13],[1532,466,9],[1549,461,3],[1485,613,7],[1578,531,6],[1603,631,3],[1609,427,6],[1629,462,9],[1667,603,5],[1679,625,3],[1688,443,4],
    [1708,313,6],[1752,436,13],[1752,502,6],[1747,550,5],[1794,549,5],[1811,494,8],[1846,437,4],[1888,562,5],[1338,674,3]];
  const blue = [[1483,384,48],[1484,328,17],[1369,380,18],[1606,466,7],[1462,429,7],[1741,274,6],[1764,362,8]];
  const dark = [[115,190,2],[115,205,2],[115,326,3],[846,266,2],[1213,348,2],[1257,422,2],[1100,288,2]];
  const sand = [[494,209,25],[490,175,10]];
  let out = '<g transform="translate(340 525) scale(.33333)">';
  [188, 327, 466, 606].forEach(y => out += `<path d="M115 ${y}H1907" stroke="#f4f4f4" stroke-width="3"/>`);
  [313, 513, 712, 911, 1111, 1309, 1509, 1708, 1907].forEach(x => out += `<path d="M${x} 135V638" stroke="#f6f6f6" stroke-width="3"/>`);
  out += '<path d="M115 143V638" stroke="#555" stroke-width="3"/>';
  [[grey, "#78848a"], [pink, "#8f6f6f"], [blue, "#5f8c99"], [sand, "#a39a6c"], [dark, "#222"]].forEach(([set, color]) => {
    out += `<g fill="${color}" fill-opacity=".23" stroke="${color}" stroke-opacity=".4" stroke-width="2">` +
      set.map(([x, y, r]) => `<circle cx="${x}" cy="${y}" r="${r}"/>`).join("") + "</g>";
  });
  out += "</g>";
  [80, 70, 60, 50].forEach((l, i) => out += text(373, 590 + Math.round(i * 46.4), l, "end", "faint"));
  [0, 10, 20, 30, 40, 50, 60, 70, 80].forEach((l, i) => out += text(378 + Math.round(i * 66.4), 749, l, "middle", "faint"));
  out += text(971, 749, "9", "start", "faint");
  document.getElementById("life").innerHTML = out;
}

legend("growthLegend", GROWTH);
legend("popLegend", POP);
legend("lifeLegend", LIFE);
drawMap();
drawTable();
drawGrowth();
drawSunburst();
drawPop();
drawLife();
```
